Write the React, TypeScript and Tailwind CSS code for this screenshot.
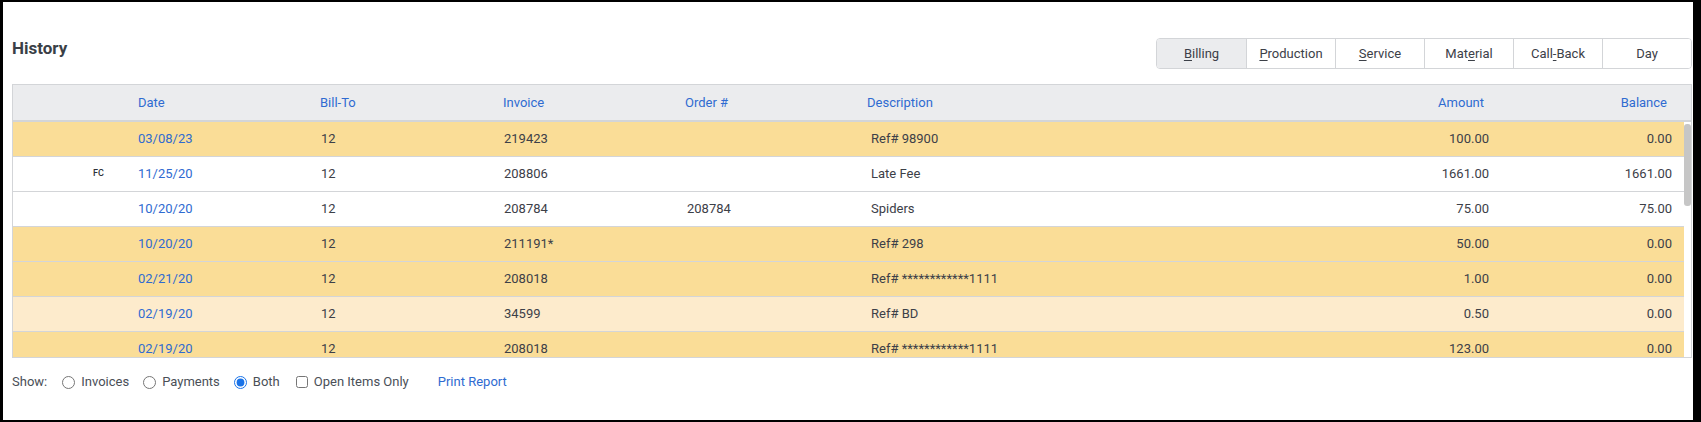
import React from 'react';

type Row = {
    tag?: string;
    date: string;
    billTo: string;
    invoice: string;
    order: string;
    desc: string;
    amount: string;
    balance: string;
    tone: 'gold' | 'white' | 'cream';
};

const rows: Row[] = [
    { date: '03/08/23', billTo: '12', invoice: '219423', order: '', desc: 'Ref# 98900', amount: '100.00', balance: '0.00', tone: 'gold' },
    { tag: 'FC', date: '11/25/20', billTo: '12', invoice: '208806', order: '', desc: 'Late Fee', amount: '1661.00', balance: '1661.00', tone: 'white' },
    { date: '10/20/20', billTo: '12', invoice: '208784', order: '208784', desc: 'Spiders', amount: '75.00', balance: '75.00', tone: 'white' },
    { date: '10/20/20', billTo: '12', invoice: '211191*', order: '', desc: 'Ref# 298', amount: '50.00', balance: '0.00', tone: 'gold' },
    { date: '02/21/20', billTo: '12', invoice: '208018', order: '', desc: 'Ref# ************1111', amount: '1.00', balance: '0.00', tone: 'gold' },
    { date: '02/19/20', billTo: '12', invoice: '34599', order: '', desc: 'Ref# BD', amount: '0.50', balance: '0.00', tone: 'cream' },
    { date: '02/19/20', billTo: '12', invoice: '208018', order: '', desc: 'Ref# ************1111', amount: '123.00', balance: '0.00', tone: 'gold' },
];

const toneClass = {
    gold: 'bg-[#fadd97]',
    white: 'bg-white',
    cream: 'bg-[#fdebcc]',
};

const tabs = [
    { pre: '', key: 'B', post: 'illing', active: true },
    { pre: '', key: 'P', post: 'roduction' },
    { pre: '', key: 'S', post: 'ervice' },
    { pre: 'Mat', key: 'e', post: 'rial' },
    { pre: 'Call', key: '-', post: 'Back' },
    { pre: 'Day', key: '', post: '' },
];

const cols = 'grid grid-cols-[117px_182px_183px_182px_182px_1fr_183px_183px]';

export default function App() {
    return (
        <div className="w-[1701px] h-[422px] bg-white border-t-2 border-b-2 border-l-[3px] border-r-[8px] border-black pl-[9px] pr-[1px] pt-[36px] font-['Roboto',sans-serif] text-[13px] text-[#3c4048]">
            {/* Title + tabs */}
            <div className="flex items-start justify-between">
                <h2 className="text-[17px] leading-[20px] font-bold text-[#3a3f47]">History</h2>
                <div className="flex h-[31px] border border-[#d3d5d8] rounded-[4px] overflow-hidden">
                    {tabs.map((tab, i) => (
                        <div
                            key={i}
                            className={`w-[89px] flex items-center justify-center ${i > 0 ? 'border-l border-[#d3d5d8]' : ''} ${tab.active ? 'bg-[#ebecee]' : 'bg-white'}`}
                        >
                            {tab.pre}
                            {tab.key && <span className="underline underline-offset-2">{tab.key}</span>}
                            {tab.post}
                        </div>
                    ))}
                </div>
            </div>

            {/* Table */}
            <div className="mt-[15px] border border-[#d3d5d8]">
                <div className={`${cols} h-[37px] items-center bg-[#ebecee] border-b-2 border-[#d3d5d8] pr-[12px] text-[#2f6bd1]`}>
                    <div />
                    <div className="pl-[8px]">Date</div>
                    <div className="pl-[8px]">Bill-To</div>
                    <div className="pl-[8px]">Invoice</div>
                    <div className="pl-[8px]">Order #</div>
                    <div className="pl-[8px]">Description</div>
                    <div className="text-right pr-[12px]">Amount</div>
                    <div className="text-right pr-[12px]">Balance</div>
                </div>
                <div className="flex h-[235px] overflow-hidden">
                    <div className="flex-1">
                        {rows.map((r, i) => (
                            <div key={i} className={`${cols} h-[35px] shrink-0 items-center border-b border-[#d3d5d8] ${toneClass[r.tone]}`}>
                                <div className="pl-[80px] text-[9px] font-medium text-[#2d3138]">{r.tag}</div>
                                <div className="pl-[8px] text-[#2f6bd1]">{r.date}</div>
                                <div className="pl-[9px]">{r.billTo}</div>
                                <div className="pl-[9px]">{r.invoice}</div>
                                <div className="pl-[10px]">{r.order}</div>
                                <div className="pl-[12px]">{r.desc}</div>
                                <div className="text-right pr-[12px]">{r.amount}</div>
                                <div className="text-right pr-[12px]">{r.balance}</div>
                            </div>
                        ))}
                    </div>
                    <div className="w-[7px] bg-white pt-[2px]">
                        <div className="h-[82px] rounded-[3px] bg-[#c6c6c6]" />
                    </div>
                </div>
            </div>

            {/* Filters */}
            <div className="mt-[14px] flex items-center h-[20px] text-[#4a4f57]">
                <span>Show:</span>
                <label className="flex items-center ml-[15px]">
                    <input type="radio" name="show" readOnly className="w-[13px] h-[13px] accent-[#1a73e8]" />
                    <span className="ml-[6px]">Invoices</span>
                </label>
                <label className="flex items-center ml-[14px]">
                    <input type="radio" name="show" readOnly className="w-[13px] h-[13px] accent-[#1a73e8]" />
                    <span className="ml-[6px]">Payments</span>
                </label>
                <label className="flex items-center ml-[14px]">
                    <input type="radio" name="show" checked readOnly className="w-[13px] h-[13px] accent-[#1a73e8]" />
                    <span className="ml-[6px]">Both</span>
                </label>
                <label className="flex items-center ml-[16px]">
                    <input type="checkbox" readOnly className="w-[12px] h-[12px] accent-[#1a73e8]" />
                    <span className="ml-[6px]">Open Items Only</span>
                </label>
                <span className="ml-[29px] text-[#2f6bd1]">Print Report</span>
            </div>
        </div>
    );
}
